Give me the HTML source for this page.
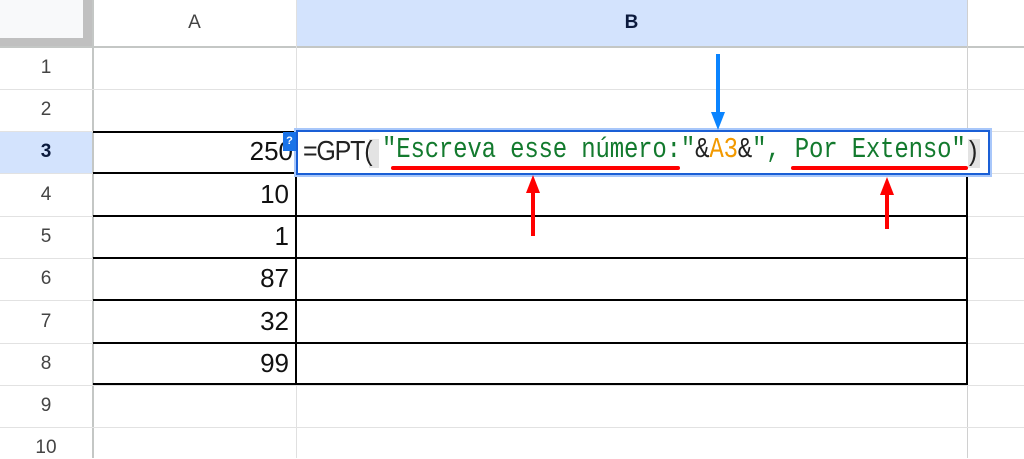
<!DOCTYPE html><html><head><style>
body{margin:0;width:1024px;height:458px;overflow:hidden;background:#fff;font-family:"Liberation Sans",sans-serif;position:relative}
.a{position:absolute}
.rn{position:absolute;left:0;width:92px;text-align:center;font-size:19px;color:#444}
</style></head><body>
<div class="a" style="left:0;top:0;width:92px;height:47px;background:#f8f9fa"></div>
<div class="a" style="left:0;top:38px;width:92px;height:9px;background:#c0c0c0"></div>
<div class="a" style="left:83px;top:0;width:9px;height:47px;background:#c0c0c0"></div>
<div class="a" style="left:296px;top:0;width:671px;height:46px;background:#d3e3fd"></div>
<div class="a" style="left:0;top:131px;width:92px;height:42px;background:#d3e3fd"></div>
<div class="a" style="left:0;top:46px;width:1024px;height:2px;background:#c4c7c5"></div>
<div class="a" style="left:92px;top:0;width:2px;height:458px;background:#c4c7c5"></div>
<div class="a" style="left:93px;top:12px;width:203px;text-align:center;font-size:19px;color:#444">A</div>
<div class="a" style="left:296px;top:12px;width:671px;text-align:center;font-size:19px;color:#0b1a3d;font-weight:bold">B</div>
<div class="a" style="left:296px;top:0;width:1px;height:458px;background:#e0e0e0"></div>
<div class="a" style="left:967px;top:0;width:1px;height:458px;background:#d0d0d0"></div>
<div class="a" style="left:0;top:89px;width:1024px;height:1px;background:#e2e2e2"></div>
<div class="a" style="left:0;top:131px;width:1024px;height:1px;background:#e2e2e2"></div>
<div class="a" style="left:0;top:173px;width:1024px;height:1px;background:#e2e2e2"></div>
<div class="a" style="left:0;top:216px;width:1024px;height:1px;background:#e2e2e2"></div>
<div class="a" style="left:0;top:258px;width:1024px;height:1px;background:#e2e2e2"></div>
<div class="a" style="left:0;top:300px;width:1024px;height:1px;background:#e2e2e2"></div>
<div class="a" style="left:0;top:343px;width:1024px;height:1px;background:#e2e2e2"></div>
<div class="a" style="left:0;top:385px;width:1024px;height:1px;background:#e2e2e2"></div>
<div class="a" style="left:0;top:427px;width:1024px;height:1px;background:#e2e2e2"></div>
<div class="a" style="left:93px;top:131px;width:875px;height:254px;border-top:2px solid #000;border-bottom:2px solid #000;border-right:2px solid #000;box-sizing:border-box"></div>
<div class="a" style="left:295px;top:131px;width:2px;height:254px;background:#000"></div>
<div class="a" style="left:93px;top:172px;width:875px;height:2px;background:#000"></div>
<div class="a" style="left:93px;top:215px;width:875px;height:2px;background:#000"></div>
<div class="a" style="left:93px;top:257px;width:875px;height:2px;background:#000"></div>
<div class="a" style="left:93px;top:299px;width:875px;height:2px;background:#000"></div>
<div class="a" style="left:93px;top:342px;width:875px;height:2px;background:#000"></div>
<div class="rn" style="top:57px">1</div>
<div class="rn" style="top:99px">2</div>
<div class="rn" style="top:141px;font-weight:bold;color:#0b1a3d">3</div>
<div class="rn" style="top:184px">4</div>
<div class="rn" style="top:226px">5</div>
<div class="rn" style="top:268px">6</div>
<div class="rn" style="top:311px">7</div>
<div class="rn" style="top:353px">8</div>
<div class="rn" style="top:395px">9</div>
<div class="rn" style="top:437px">10</div>
<div class="a" style="left:200px;top:136px;width:93px;text-align:right;font-size:26px;color:#111;overflow:hidden">250</div>
<div class="a" style="left:200px;top:179px;width:89px;text-align:right;font-size:26px;color:#111">10</div>
<div class="a" style="left:200px;top:221px;width:89px;text-align:right;font-size:26px;color:#111">1</div>
<div class="a" style="left:200px;top:263px;width:89px;text-align:right;font-size:26px;color:#111">87</div>
<div class="a" style="left:200px;top:306px;width:89px;text-align:right;font-size:26px;color:#111">32</div>
<div class="a" style="left:200px;top:348px;width:89px;text-align:right;font-size:26px;color:#111">99</div>
<div class="a" style="left:294px;top:128px;width:698px;height:49px;background:#a8c7fa"></div>
<div class="a" style="left:296px;top:130px;width:694px;height:45px;background:#fff;border:2px solid #1a5fd6;box-sizing:border-box"></div>
<div class="a" style="left:283px;top:132px;width:13px;height:19px;background:#1a73e8;color:#fff;font-size:11px;font-weight:bold;text-align:center;line-height:18px">?</div>
<div class="a" style="left:369px;top:139px;width:10px;height:29px;background:#e3e3e3"></div>
<div class="a" style="left:968px;top:139px;width:12px;height:29px;background:#e3e3e3"></div>
<div class="a" style="left:303px;top:136px;font-size:25px;color:#222;white-space:nowrap;letter-spacing:-1.2px;transform:scaleY(1.1);transform-origin:left top">=GPT(</div>
<div class="a" style="left:382px;top:134px;font-family:'Liberation Mono',monospace;font-size:24px;letter-spacing:-0.17px;white-space:nowrap;color:#222;transform:scaleY(1.2);transform-origin:left top"><span style="color:#137a2e">"Escreva esse número:"</span>&amp;<span style="color:#f29900">A3</span>&amp;<span style="color:#137a2e">", Por Extenso"</span></div>
<div class="a" style="left:969px;top:136px;font-size:25px;color:#222;transform:scaleY(1.1);transform-origin:left top">)</div>
<div class="a" style="left:391px;top:166px;width:289px;height:4px;background:#f00;border-radius:2px"></div>
<div class="a" style="left:791px;top:166px;width:177px;height:4px;background:#f00;border-radius:2px"></div>
<svg class="a" style="left:0;top:0" width="1024" height="458">
<line x1="718" y1="54" x2="718" y2="115" stroke="#0a84ff" stroke-width="4"/>
<polygon points="711,112 725,112 718,130" fill="#0a84ff"/>
<line x1="533" y1="236" x2="533" y2="190" stroke="#f00" stroke-width="4"/>
<polygon points="526,193 540,193 533,175" fill="#f00"/>
<line x1="887" y1="229" x2="887" y2="192" stroke="#f00" stroke-width="4"/>
<polygon points="880,195 894,195 887,177" fill="#f00"/>
</svg>
</body></html>
